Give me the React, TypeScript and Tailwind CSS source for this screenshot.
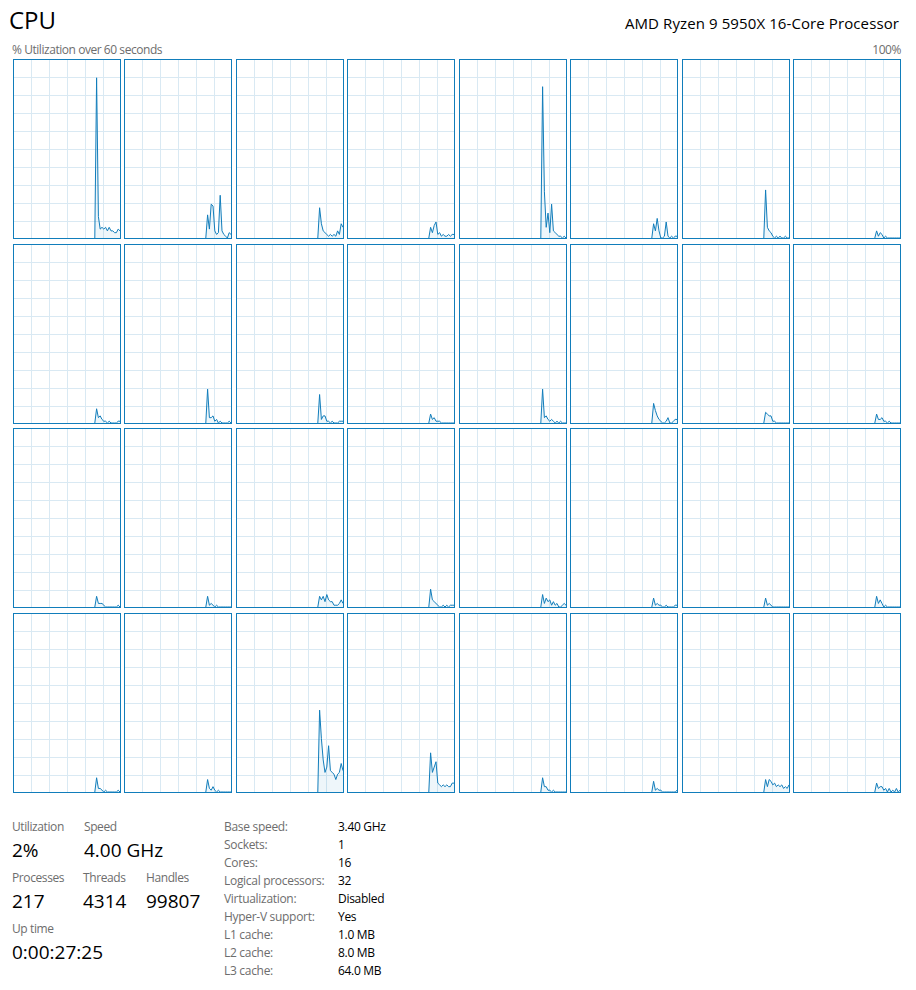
import { memo } from 'react';

// one array per logical processor, 15 most recent samples (percent)
const cores: number[][] = [
    [0, 90, 12, 5, 6, 5, 6, 4, 6, 4, 4, 3, 3, 5, 4],
    [0, 13, 5, 19, 18, 4, 2, 3, 24, 4, 2, 1, 0, 3, 2],
    [0, 17, 8, 4, 3, 2, 1, 2, 1, 2, 1, 4, 2, 8, 6],
    [0, 6, 3, 7, 9, 2, 3, 1, 2, 1, 1, 2, 1, 2, 2],
    [0, 85, 26, 6, 14, 3, 19, 4, 3, 2, 1, 1, 0, 1, 0],
    [0, 8, 4, 11, 4, 0, 0, 1, 9, 1, 0, 1, 0, 1, 1],
    [0, 27, 6, 4, 3, 1, 0, 1, 0, 1, 0, 0, 1, 0, 0],
    [0, 4, 1, 3, 2, 0, 1, 0, 0, 0, 0, 0, 0, 0, 0],

    [0, 8, 3, 4, 2, 1, 1, 0, 1, 0, 0, 0, 0, 1, 1],
    [0, 19, 3, 3, 4, 1, 2, 0, 1, 0, 0, 0, 0, 1, 0],
    [0, 16, 2, 4, 4, 1, 1, 0, 1, 0, 0, 0, 1, 1, 1],
    [0, 5, 2, 3, 1, 1, 1, 0, 0, 0, 0, 0, 0, 0, 0],
    [0, 19, 3, 4, 2, 1, 2, 1, 0, 1, 0, 1, 0, 0, 0],
    [0, 11, 7, 4, 2, 1, 0, 0, 1, 3, 0, 0, 1, 2, 2],
    [0, 6, 5, 4, 4, 1, 1, 0, 0, 0, 0, 0, 0, 0, 0],
    [0, 5, 2, 2, 3, 1, 1, 0, 1, 0, 0, 0, 0, 0, 0],

    [0, 6, 2, 2, 2, 1, 0, 0, 0, 0, 0, 0, 0, 1, 0],
    [0, 6, 1, 2, 1, 0, 1, 0, 0, 0, 0, 0, 0, 0, 0],
    [0, 6, 4, 6, 3, 7, 4, 3, 3, 1, 1, 1, 2, 4, 2],
    [0, 10, 4, 3, 2, 1, 0, 0, 1, 0, 1, 0, 1, 1, 1],
    [0, 7, 2, 5, 3, 4, 1, 3, 1, 2, 0, 0, 1, 2, 1],
    [0, 5, 1, 2, 1, 1, 0, 0, 1, 0, 0, 0, 0, 1, 1],
    [0, 5, 1, 2, 1, 0, 0, 0, 0, 0, 0, 0, 0, 0, 0],
    [0, 6, 2, 4, 2, 0, 1, 0, 0, 0, 0, 0, 0, 0, 0],

    [0, 8, 2, 2, 1, 0, 1, 0, 0, 0, 0, 0, 0, 1, 0],
    [0, 7, 2, 1, 3, 1, 0, 1, 0, 0, 0, 0, 0, 0, 0],
    [0, 46, 30, 18, 11, 14, 26, 12, 11, 10, 7, 10, 11, 16, 12],
    [0, 22, 11, 14, 17, 5, 4, 3, 4, 3, 4, 3, 3, 5, 5],
    [0, 8, 3, 3, 1, 1, 0, 1, 0, 0, 0, 0, 0, 0, 0],
    [0, 6, 1, 2, 1, 1, 0, 0, 0, 0, 0, 0, 0, 0, 1],
    [0, 7, 3, 7, 6, 4, 5, 3, 4, 3, 4, 2, 3, 2, 4],
    [0, 5, 2, 3, 3, 1, 2, 0, 2, 0, 1, 0, 2, 0, 1],
];

const W = 106;
const H = 178;
const STEP = 1.8;

function CoreGraph({ data }: { data: number[] }) {
    const x0 = W - (data.length - 1) * STEP;
    const pts = data.map((v, i) => [x0 + i * STEP, H - (v / 100) * H]);
    const line = pts.map((p) => `${p[0].toFixed(2)},${p[1].toFixed(2)}`).join(' ');
    const area = `M${x0},${H} L${line.split(' ').join(' L')} L${W},${H} Z`;

    return (
        <div className="h-[180px] border border-[#117dbb] bg-white">
            <svg width={W} height={H} viewBox={`0 0 ${W} ${H}`} className="block">
                {[1, 2, 3, 4, 5].map((i) => (
                    <line key={'v' + i} x1={i * 18 - 0.5} y1={0} x2={i * 18 - 0.5} y2={H} stroke="#d9e9f3" strokeWidth={1} />
                ))}
                {[1, 2, 3, 4, 5, 6, 7, 8, 9].map((i) => (
                    <line key={'h' + i} x1={0} y1={i * 18 - 0.5} x2={W} y2={i * 18 - 0.5} stroke="#d9e9f3" strokeWidth={1} />
                ))}
                <path d={area} fill="#117dbb" fillOpacity={0.07} />
                <polyline points={line} fill="none" stroke="#117dbb" strokeWidth={1} strokeLinejoin="round" />
            </svg>
        </div>
    );
}

const details: [string, string][] = [
    ['Base speed:', '3.40 GHz'],
    ['Sockets:', '1'],
    ['Cores:', '16'],
    ['Logical processors:', '32'],
    ['Virtualization:', 'Disabled'],
    ['Hyper-V support:', 'Yes'],
    ['L1 cache:', '1.0 MB'],
    ['L2 cache:', '8.0 MB'],
    ['L3 cache:', '64.0 MB'],
];

function Stat({ label, value, w }: { label: string; value: string; w: string }) {
    return (
        <div className={w}>
            <div className="text-[12px] leading-[16px] tracking-[-0.4px] text-[#6d6d6d]">{label}</div>
            <div className="text-[19px] leading-[30px] text-black">{value}</div>
        </div>
    );
}

function App() {
    return (
        <div className="h-[990px] w-[916px] bg-white font-['Open_Sans',sans-serif] text-black">
            <div className="flex items-baseline justify-between pl-[9px] pr-[17px]">
                <h1 className="text-[24px] leading-[40px] font-normal">CPU</h1>
                <div className="text-[15px] tracking-[0.1px]">AMD Ryzen 9 5950X 16-Core Processor</div>
            </div>
            <div className="flex justify-between pl-[12px] pr-[15px] text-[12px] leading-[19px] text-[#6d6d6d] tracking-[-0.45px]">
                <span>% Utilization over 60 seconds</span>
                <span>100%</span>
            </div>

            <div className="mx-[13px] grid w-[888px] grid-cols-8 gap-x-[3.43px] gap-y-[4.67px]">
                {cores.map((c, i) => (
                    <CoreGraph key={i} data={c} />
                ))}
            </div>

            <div className="mt-[25px] flex pl-[12px]">
                <div className="mt-[1px] flex w-[212px] flex-col gap-y-[5px]">
                    <div className="flex">
                        <Stat label="Utilization" value="2%" w="w-[72px]" />
                        <Stat label="Speed" value="4.00 GHz" w="w-[100px]" />
                    </div>
                    <div className="flex">
                        <Stat label="Processes" value="217" w="w-[71px]" />
                        <Stat label="Threads" value="4314" w="w-[63px]" />
                        <Stat label="Handles" value="99807" w="w-[70px]" />
                    </div>
                    <Stat label="Up time" value="0:00:27:25" w="w-[120px]" />
                </div>
                <div className="grid grid-cols-[114px_auto] text-[12px] leading-[18px] tracking-[-0.3px]">
                    {details.map(([k, v]) => (
                        <div key={k} className="contents">
                            <span className="text-[#6d6d6d]">{k}</span>
                            <span className="text-black">{v}</span>
                        </div>
                    ))}
                </div>
            </div>
        </div>
    );
}

export default memo(App);
